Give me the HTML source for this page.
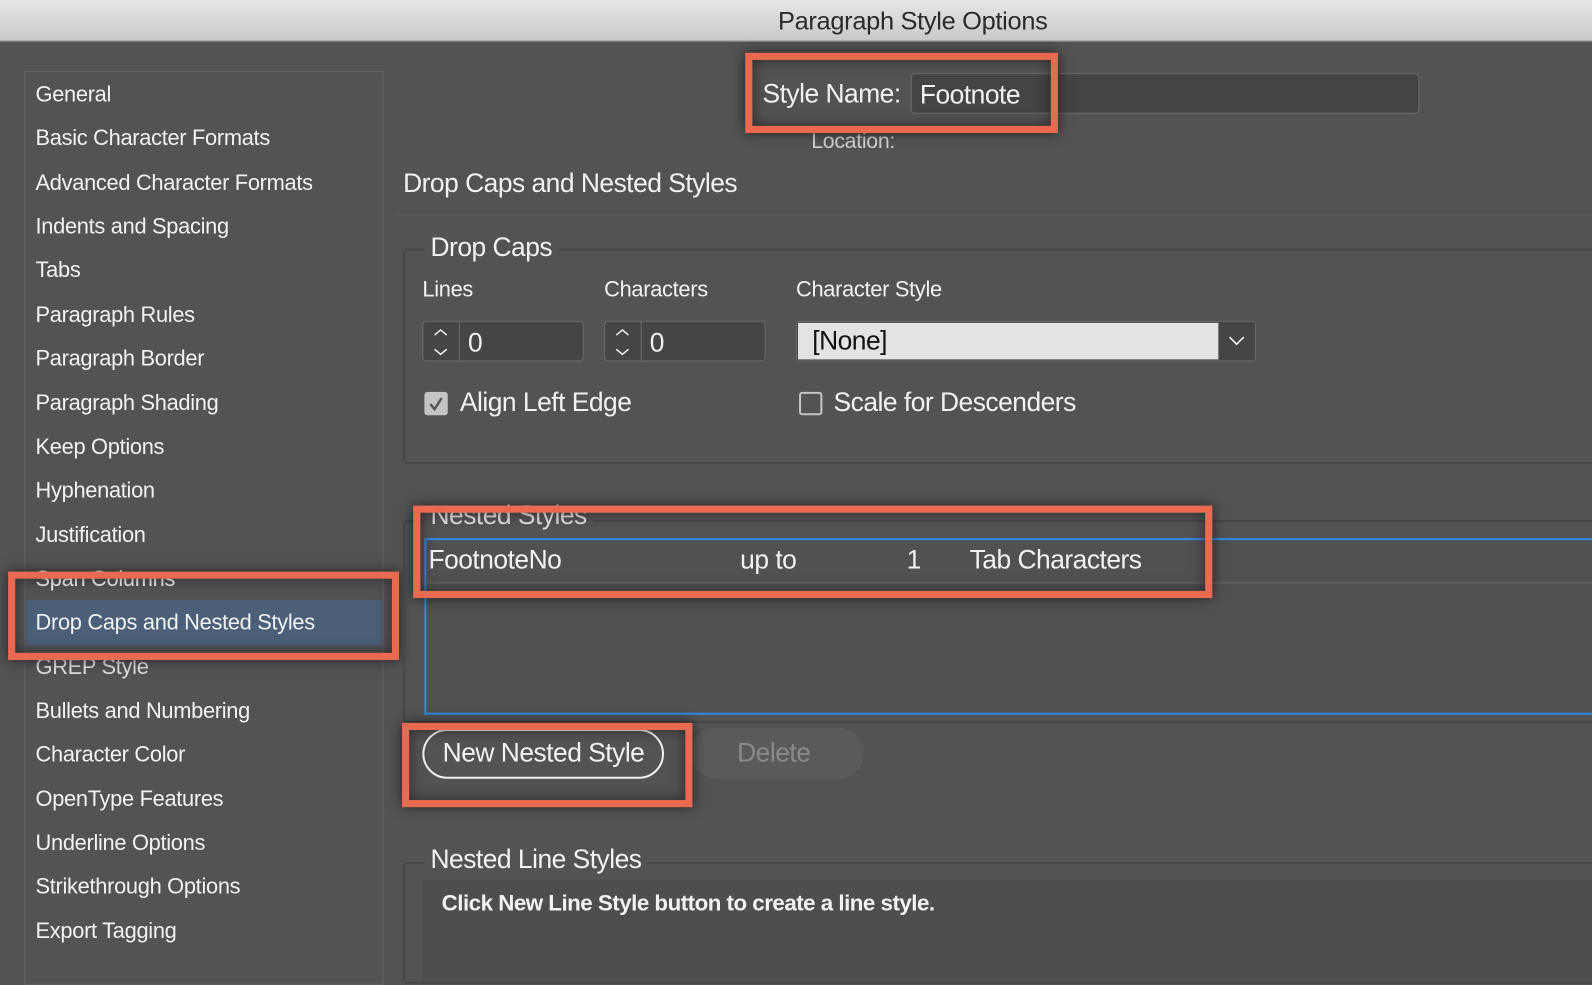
<!DOCTYPE html>
<html><head><meta charset="utf-8"><style>
*{margin:0;padding:0;box-sizing:border-box}
body{width:1592px;height:958px;overflow:hidden;background:#535353;font-family:"Liberation Sans",sans-serif;color:#f2f2f2;position:relative}
#w{position:absolute;left:0;top:0;width:1568px;height:944px;transform:scale(1.0153);transform-origin:0 0}
.a{position:absolute}
.t{position:absolute;white-space:nowrap;line-height:24px;font-size:21.5px;letter-spacing:-0.3px}
.l{font-size:26px;letter-spacing:-0.5px}
.red{position:absolute;border:7px solid #ea6a51;box-shadow:0 0 12px rgba(0,0,0,.6),inset 0 0 14px rgba(0,0,0,.5)}
</style></head><body><div id="w">
<div class="a" style="left:0;top:0;width:1600px;height:41px;background:linear-gradient(#e6e6e6,#c9c9c9);border-bottom:1px solid #9a9a9a"></div>
<div class="t" style="left:0;width:1798px;text-align:center;top:9px;font-size:25px;color:#2a2a2a">Paragraph Style Options</div>

<div class="a" style="left:24px;top:70px;width:354px;height:900px;border:1px solid #626262;background:#535353"></div>
<div class="a" style="left:26px;top:591px;width:350px;height:45px;background:#4b5f78"></div>
<div class="t" style="left:35px;top:81px">General</div>
<div class="t" style="left:35px;top:124px">Basic Character Formats</div>
<div class="t" style="left:35px;top:168px">Advanced Character Formats</div>
<div class="t" style="left:35px;top:211px">Indents and Spacing</div>
<div class="t" style="left:35px;top:254px">Tabs</div>
<div class="t" style="left:35px;top:298px">Paragraph Rules</div>
<div class="t" style="left:35px;top:341px">Paragraph Border</div>
<div class="t" style="left:35px;top:385px">Paragraph Shading</div>
<div class="t" style="left:35px;top:428px">Keep Options</div>
<div class="t" style="left:35px;top:471px">Hyphenation</div>
<div class="t" style="left:35px;top:515px">Justification</div>
<div class="t" style="left:35px;top:558px">Span Columns</div>
<div class="t" style="left:35px;top:601px">Drop Caps and Nested Styles</div>
<div class="t" style="left:35px;top:645px;color:#ddd">GREP Style</div>
<div class="t" style="left:35px;top:688px">Bullets and Numbering</div>
<div class="t" style="left:35px;top:731px">Character Color</div>
<div class="t" style="left:35px;top:775px">OpenType Features</div>
<div class="t" style="left:35px;top:818px">Underline Options</div>
<div class="t" style="left:35px;top:861px">Strikethrough Options</div>
<div class="t" style="left:35px;top:905px">Export Tagging</div>
<div class="red" style="left:8px;top:563px;width:385px;height:87px"></div>

<div class="a" style="left:897px;top:72px;width:501px;height:40px;background:#444;border:1px solid #6c6c6c;border-radius:4px"></div>
<div class="t l" style="left:751px;top:80px">Style Name:</div>
<div class="t l" style="left:906px;top:81px">Footnote</div>
<div class="t" style="left:799px;top:128px;font-size:21px;color:#cfcfcf">Location:</div>
<div class="red" style="left:734px;top:52px;width:308px;height:79px"></div>

<div class="t l" style="left:397px;top:168px">Drop Caps and Nested Styles</div>
<div class="a" style="left:390px;top:211px;width:1202px;height:1px;background:#5c5c5c"></div>

<div class="a" style="left:397px;top:245px;width:1210px;height:212px;border:2px solid #474747;border-radius:4px"></div>
<div class="t l" style="left:418px;top:231px;background:#535353;padding:0 6px">Drop Caps</div>
<div class="t" style="left:416px;top:273px">Lines</div>
<div class="t" style="left:595px;top:273px">Characters</div>
<div class="t" style="left:784px;top:273px">Character Style</div>
<div class="a" style="left:416px;top:316px;width:159px;height:40px;background:#454545;border:1px solid #6a6a6a;border-radius:4px"></div>
<div class="a" style="left:452px;top:317px;width:1px;height:38px;background:#6a6a6a"></div>
<div class="a" style="left:595px;top:316px;width:159px;height:40px;background:#454545;border:1px solid #6a6a6a;border-radius:4px"></div>
<div class="a" style="left:631px;top:317px;width:1px;height:38px;background:#6a6a6a"></div>
<svg class="a" style="left:424px;top:322px" width="20" height="30" viewBox="0 0 20 30"><path d="M4 8 L10 3 L16 8 M4 22 L10 27 L16 22" fill="none" stroke="#eee" stroke-width="1.5"/></svg>
<svg class="a" style="left:603px;top:322px" width="20" height="30" viewBox="0 0 20 30"><path d="M4 8 L10 3 L16 8 M4 22 L10 27 L16 22" fill="none" stroke="#eee" stroke-width="1.5"/></svg>
<div class="t l" style="left:461px;top:325px">0</div>
<div class="t l" style="left:640px;top:325px">0</div>
<div class="a" style="left:784px;top:316px;width:453px;height:40px;background:#454545;border:1px solid #6a6a6a;border-radius:3px"></div>
<div class="a" style="left:786px;top:318px;width:414px;height:36px;background:#e3e3e3"></div>
<div class="t l" style="left:800px;top:323px;color:#111">[None]</div>
<svg class="a" style="left:1208px;top:328px" width="20" height="14"><path d="M3 4 L10 11 L17 4" fill="none" stroke="#eee" stroke-width="1.6"/></svg>
<div class="a" style="left:418px;top:386px;width:23px;height:23px;background:#c4c4c4;border-radius:3px"></div>
<svg class="a" style="left:418px;top:386px" width="23" height="23"><path d="M6 12 L10 17 L17 6" fill="none" stroke="#555" stroke-width="2.4"/></svg>
<div class="t l" style="left:453px;top:384px">Align Left Edge</div>
<div class="a" style="left:787px;top:386px;width:23px;height:23px;border:2px solid #c4c4c4;border-radius:3px"></div>
<div class="t l" style="left:821px;top:384px">Scale for Descenders</div>

<div class="a" style="left:397px;top:512px;width:1210px;height:200px;border:2px solid #474747;border-radius:4px"></div>
<div class="t l" style="left:418px;top:495px;background:#535353;padding:0 6px;color:#ddd">Nested Styles</div>
<div class="a" style="left:418px;top:530px;width:1180px;height:174px;border:2px solid #2f8ae0;background:#515151"></div>
<div class="a" style="left:420px;top:573px;width:1180px;height:2px;background:#5e5e5e"></div>
<div class="t l" style="left:422px;top:539px">FootnoteNo</div>
<div class="t l" style="left:729px;top:539px">up to</div>
<div class="t l" style="left:893px;top:539px">1</div>
<div class="t l" style="left:955px;top:539px">Tab Characters</div>
<div class="red" style="left:407px;top:498px;width:787px;height:91px"></div>

<div class="a" style="left:680px;top:717px;width:171px;height:50px;background:#5a5a5a;border-radius:25px"></div>
<div class="t l" style="left:726px;top:729px;color:#8a8a8a">Delete</div>
<div class="a" style="left:416px;top:718px;width:238px;height:49px;border:2px solid #f0f0f0;border-radius:25px"></div>
<div class="t l" style="left:436px;top:729px">New Nested Style</div>
<div class="red" style="left:396px;top:712px;width:286px;height:83px"></div>

<div class="a" style="left:397px;top:849px;width:1210px;height:120px;border:2px solid #474747;border-radius:4px"></div>
<div class="t l" style="left:418px;top:834px;background:#535353;padding:0 6px">Nested Line Styles</div>
<div class="a" style="left:416px;top:867px;width:1190px;height:100px;background:#4e4e4e"></div>
<div class="t" style="left:435px;top:878px;font-weight:bold;font-size:22px;letter-spacing:-0.5px">Click New Line Style button to create a line style.</div>
</div></body></html>
